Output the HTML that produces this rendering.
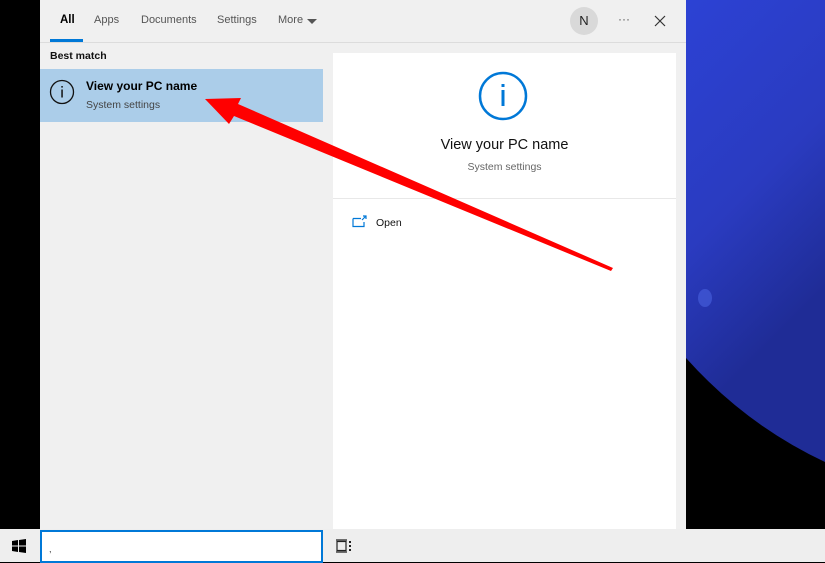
<!DOCTYPE html>
<html><head><style>
body{margin:0;width:825px;height:562px;overflow:hidden;position:relative;background:#000;font-family:"Segoe UI","Liberation Sans",sans-serif}
.abs{position:absolute;white-space:nowrap}
</style></head><body>
<svg class="abs" style="left:686px;top:0" width="139" height="530">
<defs><linearGradient id="g" x1="0" y1="0" x2="0.3" y2="1"><stop offset="0" stop-color="#2c42d4"/><stop offset="0.5" stop-color="#2a3bc0"/><stop offset="0.85" stop-color="#1f2c96"/></linearGradient></defs>
<rect width="139" height="530" fill="#000"/>
<path d="M0 0 H139 V462 Q60 425 0 358 Z" fill="url(#g)"/>
<ellipse cx="19" cy="298" rx="7" ry="9" fill="#4a63e0" opacity="0.6"/>
</svg>
<div class="abs" style="left:40px;top:0;width:646px;height:530px;background:#f0f0f0"></div>
<div class="abs" style="left:40px;top:42px;width:646px;height:1px;background:#dcdcdc"></div>
<div class="abs" style="left:60px;top:14px;font-size:11.5px;color:#000;font-weight:600">All</div>
<div class="abs" style="left:50px;top:39px;width:33px;height:3px;background:#0078d7"></div>
<div class="abs" style="left:94px;top:14px;font-size:11px;color:#555">Apps</div>
<div class="abs" style="left:141px;top:14px;font-size:11px;color:#555">Documents</div>
<div class="abs" style="left:217px;top:14px;font-size:11px;color:#555">Settings</div>
<div class="abs" style="left:278px;top:14px;font-size:11px;color:#555">More</div>
<div class="abs" style="left:307px;top:19px;width:0;height:0;border-left:5px solid transparent;border-right:5px solid transparent;border-top:5px solid #555"></div>
<div class="abs" style="left:570px;top:7px;width:28px;height:28px;border-radius:50%;background:#d9d9d9;font-size:13px;text-align:center;line-height:28px;color:#222">N</div>
<div class="abs" style="left:618px;top:12px;font-size:12px;color:#555">···</div>
<svg class="abs" style="left:654px;top:15px" width="12" height="12"><path d="M1 1L11 11M11 1L1 11" stroke="#333" stroke-width="1.2"/></svg>
<div class="abs" style="left:50px;top:50px;font-size:10.5px;font-weight:600;color:#111">Best match</div>
<div class="abs" style="left:40px;top:69px;width:283px;height:53px;background:#abcde9"></div>
<svg class="abs" style="left:49px;top:79px" width="26" height="26"><circle cx="13" cy="13" r="11.5" fill="none" stroke="#111" stroke-width="1.3"/><rect x="12.3" y="7" width="1.5" height="1.6" fill="#111"/><rect x="12.3" y="10.5" width="1.5" height="8" fill="#111"/></svg>
<div class="abs" style="left:86px;top:79px;font-size:12px;font-weight:600;color:#000">View your PC name</div>
<div class="abs" style="left:86px;top:99px;font-size:10.5px;color:#444">System settings</div>
<div class="abs" style="left:333px;top:53px;width:343px;height:476px;background:#fff"></div>
<div class="abs" style="left:333px;top:198px;width:343px;height:1px;background:#e8e8e8"></div>
<svg class="abs" style="left:477px;top:70px" width="52" height="52"><circle cx="26" cy="26" r="23" fill="none" stroke="#0078d7" stroke-width="2.5"/><rect x="24.5" y="14" width="3" height="3" fill="#0078d7"/><rect x="24.5" y="20" width="3" height="16" fill="#0078d7"/></svg>
<div class="abs" style="left:333px;top:137px;width:343px;text-align:center;font-size:14.5px;color:#111">View your PC name</div>
<div class="abs" style="left:333px;top:161px;width:343px;text-align:center;font-size:10.5px;color:#666">System settings</div>
<svg class="abs" style="left:352px;top:215px" width="16" height="13"><path d="M1 3.5H9M1 3.5V11.5H12V7" fill="none" stroke="#0078d7" stroke-width="1.2"/><path d="M10 5L14 1M11 1H14V4" fill="none" stroke="#0078d7" stroke-width="1.2"/></svg>
<div class="abs" style="left:376px;top:217px;font-size:10.5px;color:#111">Open</div>
<svg class="abs" style="left:0;top:0" width="825" height="562"><polygon points="205,99 241,98 238,104 613,268 611,271 234,116 229,124" fill="#ff0000"/></svg>
<div class="abs" style="left:0;top:529px;width:825px;height:33px;background:#eeeeee"></div>
<svg class="abs" style="left:12px;top:539px" width="14" height="14"><path d="M0 2L6 1V6.5H0ZM7 1L14 0V6.5H7ZM0 7.5H6V13L0 12ZM7 7.5H14V14L7 13Z" fill="#000"/></svg>
<div class="abs" style="left:40px;top:530px;width:279px;height:29px;background:#fff;border:2px solid #0078d7"></div>
<div class="abs" style="left:49px;top:544px;font-size:9px;color:#333">,</div>
<svg class="abs" style="left:336px;top:539px" width="16" height="14"><rect x="1" y="2.5" width="9" height="9" fill="none" stroke="#222" stroke-width="1.2"/><path d="M0 1H11M0 13H11" stroke="#222" stroke-width="1.2"/><rect x="13" y="2" width="2" height="2" fill="#222"/><rect x="13" y="6" width="2" height="2" fill="#222"/><rect x="13" y="10" width="2" height="2" fill="#222"/></svg>
</body></html>
